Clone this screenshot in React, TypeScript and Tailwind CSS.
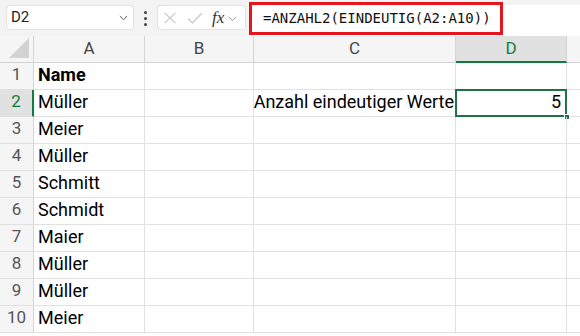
import React from 'react';

const cols = [
  { key: 'A', w: 'w-[111px]' },
  { key: 'B', w: 'w-[109px]' },
  { key: 'C', w: 'w-[202px]' },
  { key: 'D', w: 'w-[111px]' },
];

const names = ['Name', 'Müller', 'Meier', 'Müller', 'Schmitt', 'Schmidt', 'Maier', 'Müller', 'Müller', 'Meier'];

const ChevronDown = ({ className }: { className?: string }) => (
  <svg viewBox="0 0 12 8" className={className} fill="none" stroke="currentColor" strokeWidth={1.2} strokeLinecap="round" strokeLinejoin="round">
    <path d="M1.5 1.8 L6 6.2 L10.5 1.8" />
  </svg>
);

const App: React.FC = () => {
  return (
    <div className="w-[580px] h-[336px] overflow-hidden bg-white font-['Roboto',sans-serif] text-black">
      {/* formula bar */}
      <div className="flex h-[36px] items-start bg-[#f3f3f3]">
        <div className="mt-[5px] ml-[6px] flex h-[25px] w-[128px] items-center justify-between rounded-[4px] border border-[#e3e3e3] bg-white pl-[4px] pr-[5px]">
          <span className="text-[15px] text-[#222]">D2</span>
          <ChevronDown className="h-[6px] w-[9px] text-[#444]" />
        </div>
        <div className="mt-[11px] flex w-[23px] flex-col items-center gap-[3px]">
          <span className="h-[3px] w-[3px] rounded-full bg-[#444]" />
          <span className="h-[3px] w-[3px] rounded-full bg-[#444]" />
          <span className="h-[3px] w-[3px] rounded-full bg-[#444]" />
        </div>
        <div className="mt-[5px] flex h-[25px] w-[89px] items-center rounded-[4px] border border-[#e3e3e3] bg-white pl-[5px]">
          <svg viewBox="0 0 14 12" className="h-[12px] w-[14px]" fill="none" stroke="#c4c4c4" strokeWidth={1.1}>
            <path d="M1.5 0.8 L12.5 11.2 M12.5 0.8 L1.5 11.2" />
          </svg>
          <svg viewBox="0 0 16 12" className="ml-[10px] h-[12px] w-[16px]" fill="none" stroke="#c4c4c4" strokeWidth={1.1}>
            <path d="M1 6.5 L5.5 11 L15 1" />
          </svg>
          <span className="ml-[9px] font-['Liberation_Serif',serif] text-[17px] italic leading-none text-[#333]">fx</span>
          <ChevronDown className="ml-[4px] mt-[2px] h-[6px] w-[9px] text-[#888]" />
        </div>
        <div className="relative ml-[3px] h-full flex-1">
          <div className="mt-[5px] h-[31px] rounded-tl-[4px] bg-white" />
          <div className="absolute left-0 top-[2px] flex h-[33px] w-[254px] items-center border-[3px] border-[#e5141d] pl-[11px] font-['DejaVu_Sans_Mono',monospace] text-[14px] text-[#111]">
            =ANZAHL2(EINDEUTIG(A2:A10))
          </div>
        </div>
      </div>

      {/* column headers */}
      <div className="flex h-[27px] bg-[#f5f5f5]">
        <div className="relative w-[34px] shrink-0 border-r border-b border-[#d4d4d4]">
          <svg viewBox="0 0 20 20" className="absolute bottom-[4px] right-[4px] h-[20px] w-[20px]">
            <path d="M20 0 L20 20 L0 20 Z" fill="#d2d2d2" />
          </svg>
        </div>
        {cols.map((c) => (
          <div
            key={c.key}
            className={`${c.w} shrink-0 flex items-center justify-center border-r text-[17px] ${
              c.key === 'D'
                ? 'border-b-2 border-r-[#d4d4d4] border-b-[#107c41] bg-[#e1e1e1] text-[#107c41]'
                : 'border-b border-[#d4d4d4] text-[#444]'
            }`}
          >
            {c.key}
          </div>
        ))}
        <div className="flex-1 border-b border-[#d4d4d4]" />
      </div>

      {/* rows */}
      {names.map((n, i) => {
        const row = i + 1;
        const sel = row === 2;
        return (
          <div key={row} className="flex h-[27px]">
            <div
              className={`w-[34px] shrink-0 flex items-end justify-center pb-[2px] text-[17px] border-b border-[#e1e1e1] ${
                sel ? 'border-r-2 border-r-[#107c41] bg-[#e1e1e1] text-[#107c41]' : 'border-r border-r-[#d4d4d4] bg-[#f5f5f5] text-[#555]'
              }`}
            >
              {row}
            </div>
            <div className={`w-[111px] shrink-0 flex items-end border-r border-b border-[#e1e1e1] pl-[4px] pb-[1px] text-[18px] ${row === 1 ? 'font-bold' : ''}`}>
              {n}
            </div>
            <div className="w-[109px] shrink-0 border-r border-b border-[#e1e1e1]" />
            <div className="w-[202px] shrink-0 flex items-end justify-end border-r border-b border-[#e1e1e1] pr-[1px] pb-[1px] text-[18px] whitespace-nowrap">
              {sel ? 'Anzahl eindeutiger Werte' : ''}
            </div>
            <div className="relative w-[111px] shrink-0 flex items-end justify-end border-r border-b border-[#e1e1e1] pr-[5px] pb-[1px] text-[18px]">
              {sel && (
                <>
                  5
                  <div className="absolute -left-px -top-px -right-px -bottom-px border-2 border-[#217346]" />
                  <div className="absolute -bottom-[4px] -right-[4px] h-[6px] w-[6px] border border-white bg-[#217346]" />
                </>
              )}
            </div>
            <div className="flex-1 border-b border-[#e1e1e1]" />
          </div>
        );
      })}
    </div>
  );
};

export default App;
